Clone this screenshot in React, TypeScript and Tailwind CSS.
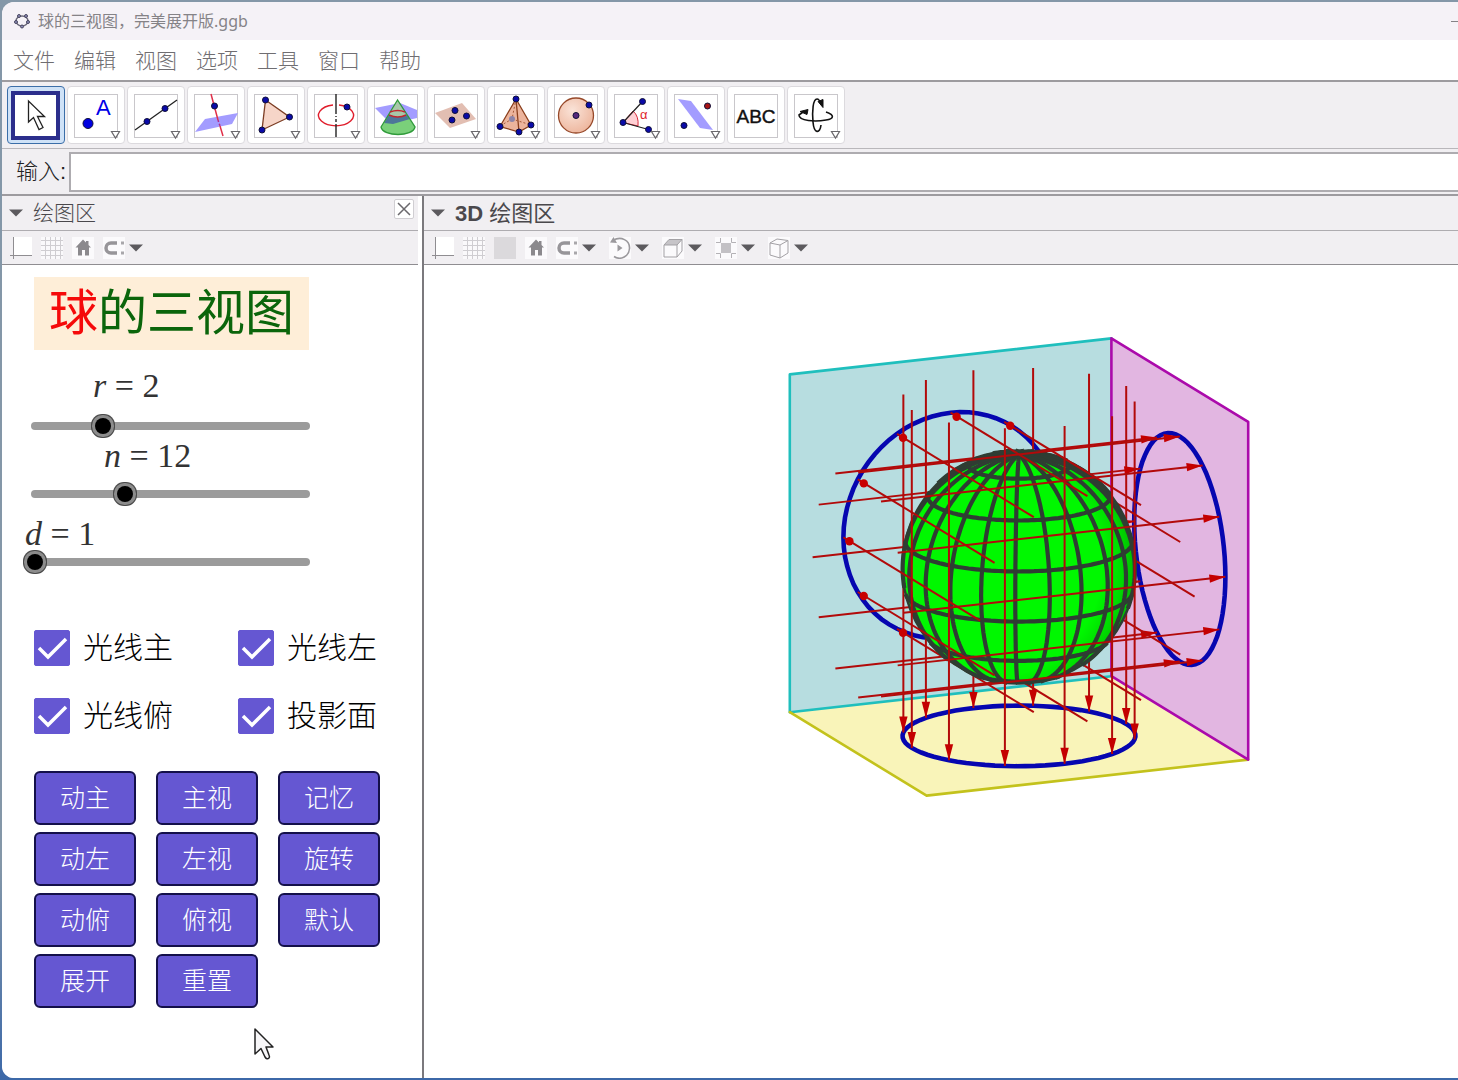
import { useState } from "react";
import type { ReactNode } from "react";

type Vec = [number, number, number];

// screen direction of one unit along each axis
const AXIS_A = [53.6, -6];
const AXIS_B = [22.8, 13.9];
const AXIS_Z = [0, -56.3];
const CENTER = [233, 233];

const project = ([a, b, z]: Vec) => [
  CENTER[0] + a * AXIS_A[0] + b * AXIS_B[0] + z * AXIS_Z[0],
  CENTER[1] + a * AXIS_A[1] + b * AXIS_B[1] + z * AXIS_Z[1],
];

const depth = ([a, b, z]: Vec) => -0.384 * a + 0.889 * b + 0.265 * z;

const toPoints = (list: Vec[]) =>
  list.map((p) => project(p).map((v) => v.toFixed(1)).join(",")).join(" ");

const rad = (deg: number) => (deg * Math.PI) / 180;

const circle = (fn: (c: number, s: number) => Vec) =>
  Array.from({ length: 73 }, (_, i) => fn(2 * Math.cos(rad(i * 5)), 2 * Math.sin(rad(i * 5))));

interface Ray {
  from: Vec;
  to: Vec;
  front: boolean;
  kind: "main" | "left" | "top";
}

const buildRays = (): Ray[] => {
  const rays: Ray[] = [];
  for (let i = 0; i < 12; i++) {
    const c = 2 * Math.cos(rad(i * 30));
    const s = 2 * Math.sin(rad(i * 30));
    rays.push({ from: [c, 3, s], to: [c, -3, s], front: depth([c, 0, s]) > 0, kind: "main" });
    rays.push({ from: [-3, c, s], to: [3, c, s], front: depth([0, c, s]) > 0, kind: "left" });
    rays.push({ from: [c, s, 3], to: [c, s, -3], front: depth([c, s, 0]) > 0, kind: "top" });
  }
  return rays;
};

const rays = buildRays();

const RayLine = ({ ray }: { ray: Ray }) => {
  const [x1, y1] = project(ray.from);
  const [x2, y2] = project(ray.to);
  const angle = (Math.atan2(y2 - y1, x2 - x1) * 180) / Math.PI;
  return (
    <g>
      <line x1={x1} y1={y1} x2={x2} y2={y2} stroke="#b20a0a" strokeWidth="2" />
      {ray.kind === "main" ? (
        <circle cx={x2 + 6} cy={y2 + 4} r="4.2" fill="#c80000" />
      ) : (
        <polygon
          points="0,0 -16,-4.2 -16,4.2"
          fill="#c40000"
          transform={`translate(${x2} ${y2}) rotate(${angle})`}
        />
      )}
    </g>
  );
};

// the sphere's mesh, cut where it turns away from the viewer
const visibleRuns = (pts: Vec[]) => {
  const runs: Vec[][] = [];
  let run: Vec[] = [];
  pts.forEach((p) => {
    if (depth(p) >= 0) {
      run.push(p);
    } else if (run.length) {
      runs.push(run);
      run = [];
    }
  });
  if (run.length) runs.push(run);
  return runs;
};

const onSphere = (lat: number, lon: number): Vec => {
  // lon 0 points straight at the viewer
  const base = Math.atan2(0.889, -0.384);
  const t = base - rad(lon);
  return [
    2 * Math.cos(rad(lat)) * Math.cos(t),
    2 * Math.cos(rad(lat)) * Math.sin(t),
    2 * Math.sin(rad(lat)),
  ];
};

const buildMesh = () => {
  const lines: Vec[][] = [];
  for (let i = 1; i < 7; i++) {
    const lat = -90 + (i * 180) / 7;
    const pts: Vec[] = [];
    for (let lon = -180; lon <= 180; lon += 2) pts.push(onSphere(lat, lon));
    lines.push(...visibleRuns(pts));
  }
  for (let i = 0; i < 21; i++) {
    const lon = 1.5 + (i * 360) / 21;
    const pts: Vec[] = [];
    for (let lat = -90; lat <= 90; lat += 2) pts.push(onSphere(lat, -lon));
    lines.push(...visibleRuns(pts));
  }
  return lines;
};

const mesh = buildMesh();

const Scene = ({ show }: { show: Record<string, boolean> }) => {
  const shown = rays.filter((r) => show[r.kind]);
  return (
    <svg width="466" height="466" viewBox="0 0 466 466" className="shrink-0" role="img" aria-label="3D">
      <defs>
        <radialGradient id="ball" cx="0.38" cy="0.5" r="0.66">
          <stop offset="0.72" stopColor="#00f800" />
          <stop offset="0.86" stopColor="#00d800" />
          <stop offset="1" stopColor="#00a400" />
        </radialGradient>
      </defs>
      {show.planes && (
        <g strokeLinejoin="round" strokeLinecap="round" strokeWidth="2.6">
          <polygon points={toPoints([[-3, -3, 3], [3, -3, 3], [3, -3, -3], [-3, -3, -3]])} fill="#b7dde0" />
          <polygon points={toPoints([[3, -3, 3], [3, 3, 3], [3, 3, -3], [3, -3, -3]])} fill="#e2b6e1" />
          <polygon points={toPoints([[-3, -3, -3], [3, -3, -3], [3, 3, -3], [-3, 3, -3]])} fill="#f9f4b9" />
          <polyline points={toPoints([[3, -3, 3], [-3, -3, 3], [-3, -3, -3], [3, -3, -3]])} fill="none" stroke="#1fbfbd" />
          <polyline points={toPoints([[-3, -3, -3], [-3, 3, -3], [3, 3, -3]])} fill="none" stroke="#c3c21c" />
          <polygon points={toPoints([[3, -3, 3], [3, 3, 3], [3, 3, -3], [3, -3, -3]])} fill="none" stroke="#ab0aab" />
        </g>
      )}
      <g fill="none" stroke="#0606b0" strokeWidth="4.6">
        <polyline points={toPoints(circle((c, s) => [c, -3, s]))} />
        <polyline points={toPoints(circle((c, s) => [3, c, s]))} />
        <polyline points={toPoints(circle((c, s) => [c, s, -3]))} />
      </g>
      {shown.filter((r) => !r.front).map((r, i) => (
        <RayLine key={i} ray={r} />
      ))}
      <circle cx="233" cy="233" r="116.6" fill="url(#ball)" stroke="#2f3d33" strokeWidth="2.5" />
      <g fill="none" stroke="#2f3d33" strokeWidth="4.2">
        {mesh.map((m, i) => (
          <polyline key={i} points={toPoints(m)} />
        ))}
      </g>
      {shown.filter((r) => r.front).map((r, i) => (
        <RayLine key={i} ray={r} />
      ))}
    </svg>
  );
};

const Dot = ({ x, y, r = 3, fill = "#0a0aa8" }: { x: number; y: number; r?: number; fill?: string }) => (
  <circle cx={x} cy={y} r={r} fill={fill} stroke="#10103a" strokeWidth="1" />
);

const tools: { name: string; menu: boolean; icon: ReactNode }[] = [
  {
    name: "移动",
    menu: false,
    icon: <path d="M21.5 15v21l5-4.5 5.5 12 4-2-5.500-11h7z" fill="#fff" stroke="#222" strokeWidth="1.300" />,
  },
  {
    name: "点",
    menu: true,
    icon: (
      <>
        <Dot x={21} y={37.500} r={5} fill="#0000e0" />
        <text x="29" y="29" fontSize="22" fill="#0000e8" fontFamily="Liberation Sans, sans-serif">A</text>
      </>
    ),
  },
  {
    name: "直线",
    menu: true,
    icon: (
      <>
        <path d="M8 44 50 14" stroke="#222" strokeWidth="1.300" />
        <Dot x={20} y={35.500} />
        <Dot x={38} y={22.500} />
      </>
    ),
  },
  {
    name: "垂线",
    menu: true,
    icon: (
      <>
        <path d="M8 46 18 33 51 27 45 38z" fill="#a39cff" />
        <path d="M24 8 31 34M33 40l3 10" stroke="#e0304a" strokeWidth="1.500" />
        <path d="m31 34 2 6" stroke="#b32b88" strokeWidth="1.500" strokeDasharray="2 2" />
        <Dot x={27.500} y={20} />
      </>
    ),
  },
  {
    name: "多边形",
    menu: true,
    icon: (
      <>
        <path d="M18.500 14 42.500 31 15 44z" fill="#f6d5c8" stroke="#7c3d24" strokeWidth="1.300" />
        <Dot x={18.500} y={14} />
        <Dot x={42.500} y={31} />
        <Dot x={15} y={44} />
      </>
    ),
  },
  {
    name: "圆",
    menu: true,
    icon: (
      <>
        <path d="M26 19a17.500 10.500 0 1 0 6 0" fill="none" stroke="#e01e2c" strokeWidth="1.400" />
        <path d="M29 8v20M29 39v12" stroke="#222" strokeWidth="1.400" />
        <path d="M29 30v9" stroke="#222" strokeWidth="1.400" strokeDasharray="1 2 3 2" />
        <Dot x={40} y={21} />
      </>
    ),
  },
  {
    name: "相交曲线",
    menu: false,
    icon: (
      <>
        <path d="M8 22 33 17 50 24 50 32 24 38z" fill="#a39cff" />
        <path d="M22 28 14 41c2 10 32 10 34 0L39 28z" fill="#7ad07a" />
        <path d="M22 28 17 37 26 38 43 33 39 28z" fill="#4d7699" />
        <path d="M30.500 14 22 29q8 4 17 0z" fill="#a8c8a8" />
        <path d="M30.500 14 14 41c2 10 32 10 34 0z" fill="none" stroke="#2f9a3a" strokeWidth="1.300" />
        <path d="M22 29q9 4 17 0M23 26q8-3 15 0" fill="none" stroke="#c1272d" strokeWidth="1.400" />
      </>
    ),
  },
  {
    name: "平面",
    menu: true,
    icon: (
      <>
        <path d="M8 27 35 17 49 33 23 42z" fill="#e2beb2" />
        <Dot x={28} y={24.500} />
        <Dot x={39.500} y={30} />
        <Dot x={25} y={34} />
      </>
    ),
  },
  {
    name: "棱锥",
    menu: true,
    icon: (
      <>
        <path d="M29 13 13 40.500 32 46 44 39z" fill="#ecb49c" stroke="#8b3f1d" strokeWidth="1.300" />
        <path d="M29 13 32 46" stroke="#8b3f1d" strokeWidth="1.300" />
        <path d="M29 13 25 33 13 40M25 33l19 6" fill="none" stroke="#a35a3a" strokeDasharray="2 2" />
        <circle cx="25" cy="33" r="3" fill="#8d84a8" />
        <Dot x={29} y={13} />
        <Dot x={13} y={40.500} />
        <Dot x={32} y={46} />
        <Dot x={44} y={39} />
      </>
    ),
  },
  {
    name: "球面",
    menu: true,
    icon: (
      <>
        <defs>
          <radialGradient id="peach" cx="0.4" cy="0.35" r="0.65">
            <stop offset="0" stopColor="#fae3d8" />
            <stop offset="1" stopColor="#eeb8a0" />
          </radialGradient>
        </defs>
        <circle cx="29" cy="29.500" r="17.500" fill="url(#peach)" stroke="#97492a" strokeWidth="1.300" />
        <Dot x={29} y={29.500} fill="#56287c" />
        <Dot x={42} y={19} />
      </>
    ),
  },
  {
    name: "角度",
    menu: true,
    icon: (
      <>
        <path d="M16 36.500 26 25q6 5 5 15z" fill="#ffd0d4" stroke="#d9283a" />
        <path d="M35.500 15.500 16 36.500 41.500 43.500" fill="none" stroke="#222" strokeWidth="1.200" />
        <text x="33" y="33" fontSize="13" fill="#e01e2c" fontFamily="Liberation Sans, sans-serif">α</text>
        <Dot x={35.500} y={15.500} />
        <Dot x={16} y={36.500} />
        <Dot x={41.500} y={43.500} />
      </>
    ),
  },
  {
    name: "对称",
    menu: true,
    icon: (
      <>
        <path d="M11 13 24 15 46 44 33 42z" fill="#a39cff" />
        <Dot x={40.500} y={20} fill="#a81414" />
        <Dot x={17} y={39.500} />
      </>
    ),
  },
  {
    name: "文本",
    menu: false,
    icon: (
      <text x="29" y="37" textAnchor="middle" fontSize="19" fill="#111" stroke="#111" strokeWidth="0.400" fontFamily="Liberation Sans, sans-serif">ABC</text>
    ),
  },
  {
    name: "旋转视图",
    menu: true,
    icon: (
      <>
        <path d="M34 39c-1 9-7 9-8-3-1-11 0-23 4-23 2 0 3 2 4 5" fill="none" stroke="#111" strokeWidth="1.600" />
        <path d="M39 26c9 3 8 7 0 8-11 2-27 1-27-5l4-3" fill="none" stroke="#111" strokeWidth="1.600" />
        <path d="M31 15.500l5 6 0-8zM13 25.500l8-2-1 5z" fill="#111" stroke="#111" />
      </>
    ),
  },
];

const menus = ["文件", "编辑", "视图", "选项", "工具", "窗口", "帮助"];

const buttons = ["动主", "主视", "记忆", "动左", "左视", "旋转", "动俯", "俯视", "默认", "展开", "重置"];

const checks = [
  { key: "main", label: "光线主" },
  { key: "left", label: "光线左" },
  { key: "top", label: "光线俯" },
  { key: "planes", label: "投影面" },
];

const Caret = () => (
  <svg width="14" height="8" viewBox="0 0 14 8" className="shrink-0">
    <path d="M0 0.500h14L7 7.500z" fill="#5c5a5e" />
  </svg>
);

const AxesIcon = () => (
  <svg width="22" height="22" viewBox="0 0 22 22" className="block">
    <rect x="3" width="19" height="18" fill="#fff" />
    <path d="M3.500 0v22M0 18.500h22" stroke="#8f8d91" />
  </svg>
);

const GridIcon = () => (
  <svg width="22" height="22" viewBox="0 0 22 22" className="block">
    <rect width="22" height="22" fill="#faf9fb" />
    <path d="M4.500 0v22M9.500 0v22M14.500 0v22M19.500 0v22M0 3.500h22M0 8.500h22M0 13.500h22M0 18.500h22" stroke="#cfcdd1" />
  </svg>
);

const PlaneIcon = () => (
  <svg width="22" height="22" viewBox="0 0 22 22" className="block">
    <rect width="22" height="22" fill="#dbd9dc" />
  </svg>
);

const HomeIcon = () => (
  <svg width="22" height="22" viewBox="0 0 22 22" className="block">
    <rect width="22" height="22" fill="#fbfafc" />
    <path d="M11 2.500 3.500 10.500H6V18.500h4V13h3v5.500h4v-8h2L16.500 8V4h-2.500v1.500z" fill="#8b898d" />
  </svg>
);

const MagnetIcon = () => (
  <svg width="22" height="22" viewBox="0 0 22 22" className="block">
    <rect width="22" height="22" fill="#fbfafc" />
    <path d="M14 6H8a5 5 0 0 0 0 10h6" fill="none" stroke="#979599" strokeWidth="3.500" />
    <path d="M18 6h3M18 16h3" stroke="#a9a7ab" strokeWidth="3" />
  </svg>
);

const SpinIcon = () => (
  <svg width="22" height="22" viewBox="0 0 22 22" className="block">
    <rect width="22" height="22" fill="#fbfafc" />
    <path d="M4 3.500c8-5 17 0 16.500 8C20 19 12 24 5 19.500" fill="none" stroke="#9b999d" strokeWidth="1.600" />
    <path d="M1 5.500 8 6 4.500 0zM8.500 7.500v7l5-3.500z" fill="#9b999d" />
  </svg>
);

const CubeTopIcon = () => (
  <svg width="22" height="22" viewBox="0 0 22 22" className="block">
    <rect width="22" height="22" fill="#fbfafc" />
    <path d="M2 8 7 2.500H20L15 8z" fill="#c6c4c8" />
    <path d="M2 8H15V20H2zM2 8 7 2.500H20V14l-5 6M15 8l5-5.500" fill="none" stroke="#a3a1a5" />
  </svg>
);

const ClipIcon = () => (
  <svg width="22" height="22" viewBox="0 0 22 22" className="block">
    <rect width="22" height="22" fill="#fbfafc" />
    <rect x="6" y="6" width="10" height="10" fill="#c3c1c5" />
    <path d="M5.500 1v4.500H1M16.500 1v4.500H21M5.500 21v-4.500H1M16.500 21v-4.500H21" fill="none" stroke="#b4b2b6" />
  </svg>
);

const CubeIcon = () => (
  <svg width="22" height="22" viewBox="0 0 22 22" className="block">
    <rect width="22" height="22" fill="#fbfafc" />
    <path d="M2 6 12 8V21L2 18zM2 6 9 2 20 3.500 12 8M20 3.500V16l-8 5" fill="none" stroke="#a3a1a5" />
  </svg>
);

const StyleButton = ({ label, menu, children }: { label: string; menu?: boolean; children: ReactNode }) => (
  <button type="button" aria-label={label} className="flex items-center gap-1">
    {children}
    {menu && <Caret />}
  </button>
);

interface SliderProps {
  name: string;
  min: number;
  max: number;
  start: number;
  labelClass: string;
}

const Slider = ({ name, min, max, start, labelClass }: SliderProps) => {
  const [value, setValue] = useState(start);
  return (
    <div className="flex h-[62px] flex-col justify-between">
      <label htmlFor={name} className={`font-['Liberation_Serif',serif] text-[34px] leading-9 text-[#333] ${labelClass}`}>
        <span className="italic">{name}</span> = {value}
      </label>
      <input
        id={name}
        type="range"
        min={min}
        max={max}
        value={value}
        onChange={(e) => setValue(Number(e.target.value))}
        className="ml-[29px] h-2 w-[279px] appearance-none rounded-full bg-[#9b9b9b] [&::-webkit-slider-thumb]:h-2 [&::-webkit-slider-thumb]:w-2 [&::-webkit-slider-thumb]:appearance-none [&::-webkit-slider-thumb]:rounded-full [&::-webkit-slider-thumb]:bg-black [&::-webkit-slider-thumb]:shadow-[0_0_0_4px_#000,0_0_0_7px_#8c8c8c,0_0_0_8px_#4a4a4a]"
      />
    </div>
  );
};

const App = () => {
  const [show, setShow] = useState<Record<string, boolean>>({ main: true, left: true, top: true, planes: true });

  return (
    <div className="min-h-screen bg-linear-to-b from-[#8497a8] from-80% to-[#3c68a8] pl-[2px] pt-[2px] pb-[2px] flex flex-col font-['Liberation_Sans','Noto_Sans_CJK_SC',sans-serif]">
      <div className="flex-1 flex flex-col bg-[#f1eff2] rounded-l-xl overflow-hidden">
        <header className="h-[38px] bg-[#f5f2f7] flex items-center pl-3 text-[#858387]">
          <svg width="16" height="16" viewBox="0 0 16 16" fill="none">
            <ellipse cx="8" cy="8" rx="6" ry="5" stroke="#6a6878" strokeWidth="1.500" />
            <g fill="#8d8bb8" stroke="#4a4860">
              <circle cx="5" cy="3" r="1.500" />
              <circle cx="12" cy="3" r="1.500" />
              <circle cx="14" cy="9" r="1.500" />
              <circle cx="8" cy="13.500" r="1.500" />
              <circle cx="2" cy="9" r="1.500" />
            </g>
          </svg>
          <h1 className="ml-2 text-base font-['Noto_Sans','Noto_Sans_CJK_SC',sans-serif]">球的三视图，完美展开版.ggb</h1>
          <button type="button" aria-label="最小化" className="ml-auto h-px w-[7px] bg-[#858387]" />
        </header>

        <nav className="h-10 bg-white flex items-center gap-[19px] pl-[11px] pt-0.5 text-[21px] font-light text-[#6f6d71]">
          {menus.map((m) => (
            <button key={m} type="button">{m}</button>
          ))}
        </nav>

        <div className="h-[69px] border-t-2 border-t-[#9d9b9f] border-b border-b-[#b9b7bb] flex items-center gap-[2px] pl-[5px]">
          {tools.map((t, i) => (
            <button
              key={t.name}
              type="button"
              aria-label={t.name}
              className={`size-[58px] shrink-0 rounded-sm border ${i === 0 ? "border-[#3b6ea8] bg-[#cfe2f7]" : "border-[#dcdade] bg-white"}`}
            >
              <svg width="56" height="56" viewBox="1 1 56 56" className="block">
                {i === 0 ? (
                  <rect x="6" y="7" width="45" height="45" fill="#fff" stroke="#2b2e8c" strokeWidth="4" />
                ) : (
                  <rect x="7.500" y="8.500" width="43" height="43" fill="#fff" stroke="#c9c7cb" />
                )}
                {t.icon}
                {t.menu && <path d="M44.500 45.500h8L48.500 52z" fill="#fff" stroke="#6a686c" strokeWidth="1.200" />}
              </svg>
            </button>
          ))}
        </div>

        <div className="h-[47px] border-b-2 border-[#9d9b9f] flex items-center pl-3.5">
          <label htmlFor="command" className="w-[53px] text-[22px] font-light text-[#222]">输入:</label>
          <input id="command" type="text" className="h-10 min-w-0 flex-1 border-2 border-r-0 border-[#aeacb0] bg-white px-2 text-lg outline-none" />
        </div>

        <main className="flex-1 flex">
          <section className="w-[422px] shrink-0 flex flex-col bg-white border-r-2 border-[#7b797d] pr-[4px]">
            <div className="h-[35px] bg-[#f1eff2] border-b border-[#aeacb0] flex items-center pl-[7px] pr-1">
              <Caret />
              <h2 className="ml-2.5 text-[21px] font-light text-[#4a484c]">绘图区</h2>
              <button type="button" aria-label="关闭" className="ml-auto mb-2 size-5 rounded-xs border border-[#d0ced2] bg-white flex items-center justify-center">
                <svg width="14" height="14" viewBox="0 0 14 14">
                  <path d="M1 1 13 13M13 1 1 13" stroke="#6a686c" strokeWidth="1.500" />
                </svg>
              </button>
            </div>
            <div className="h-[34px] bg-[#f1eff2] border-b border-[#8f8d91] flex items-center gap-[9px] pl-2">
              <StyleButton label="坐标轴"><AxesIcon /></StyleButton>
              <StyleButton label="网格"><GridIcon /></StyleButton>
              <StyleButton label="默认视图"><HomeIcon /></StyleButton>
              <StyleButton label="捕捉" menu><MagnetIcon /></StyleButton>
            </div>

            <div className="flex-1 flex flex-col pt-3">
              <div className="ml-8 flex h-[73px] w-[275px] items-center justify-center bg-[#feeed8] text-[49px] text-[#0b650b]">
                <span className="text-[#f50a0a]">球</span>的三视图
              </div>

              <div className="mt-[18px] flex flex-col gap-[6px]">
                <Slider name="r" min={1} max={5} start={2} labelClass="ml-[91px]" />
                <Slider name="n" min={3} max={30} start={12} labelClass="ml-[102px] mt-0.5" />
                <Slider name="d" min={1} max={6} start={1} labelClass="ml-[23px] mt-3" />
              </div>

              <div className="ml-8 mt-[64px] grid w-[370px] grid-cols-[204px_1fr] gap-y-[33px]">
                {checks.map((c) => (
                  <label key={c.key} className="flex h-[35px] items-center text-[30px] font-light text-black">
                    <span className="relative mr-[13px] block size-9">
                      <input
                        type="checkbox"
                        checked={show[c.key]}
                        onChange={() => setShow({ ...show, [c.key]: !show[c.key] })}
                        className="peer block size-9 appearance-none rounded-xs border border-[#6557d2] checked:bg-[#6557d2]"
                      />
                      <svg viewBox="0 0 36 36" className="pointer-events-none absolute inset-0 hidden size-9 peer-checked:block">
                        <path d="M5 18 14 27 32 9" fill="none" stroke="#fff" strokeWidth="3.500" />
                      </svg>
                    </span>
                    {c.label}
                  </label>
                ))}
              </div>

              <div className="ml-8 mt-[38px] grid grid-cols-[102px_102px_102px] gap-x-5 gap-y-[7px]">
                {buttons.map((b) => (
                  <button key={b} type="button" className="h-[54px] rounded-md border-2 border-[#14104a] bg-[#6557d2] pt-0.5 text-[25px] font-light text-white">
                    {b}
                  </button>
                ))}
              </div>

              <svg width="22" height="34" viewBox="0 0 22 34" className="ml-[251px] mt-[19px]">
                <path d="M2 2V27L8 21.500 12 30Q14 33 16 31Q17 30 16 28L13 20H20z" fill="#f7f6f8" stroke="#222" strokeWidth="1.500" strokeLinejoin="round" />
              </svg>
            </div>
          </section>

          <section className="flex min-w-0 flex-1 flex-col bg-white">
            <div className="h-[35px] bg-[#f1eff2] border-b border-[#aeacb0] flex items-center pl-[7px]">
              <Caret />
              <h2 className="ml-2.5 text-[22px] font-bold text-[#4a484c]">
                3D <span className="font-normal">绘图区</span>
              </h2>
            </div>
            <div className="h-[34px] bg-[#f1eff2] border-b border-[#8f8d91] flex items-center gap-[13px] pl-2">
              <div className="flex gap-[9px]">
                <StyleButton label="3D 坐标轴"><AxesIcon /></StyleButton>
                <StyleButton label="3D 网格"><GridIcon /></StyleButton>
                <StyleButton label="平面"><PlaneIcon /></StyleButton>
                <StyleButton label="3D 默认视图"><HomeIcon /></StyleButton>
                <StyleButton label="3D 捕捉" menu><MagnetIcon /></StyleButton>
              </div>
              <StyleButton label="旋转" menu><SpinIcon /></StyleButton>
              <StyleButton label="视角" menu><CubeTopIcon /></StyleButton>
              <StyleButton label="裁剪" menu><ClipIcon /></StyleButton>
              <StyleButton label="投影" menu><CubeIcon /></StyleButton>
            </div>
            <div className="flex-1 overflow-hidden pl-[362px] pt-[69px]">
              <Scene show={show} />
            </div>
          </section>
        </main>
      </div>
    </div>
  );
};

export default App;
